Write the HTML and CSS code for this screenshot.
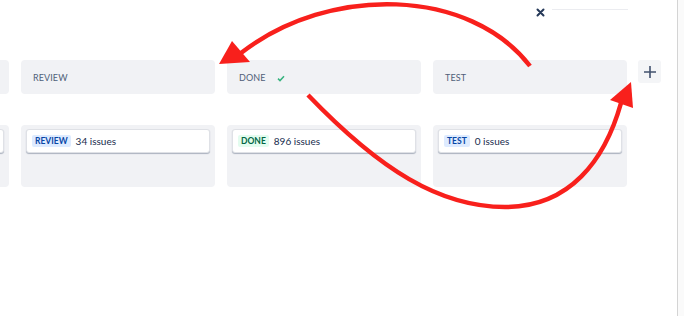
FILE: index.html
```html
<!DOCTYPE html>
<html lang="en">
<head>
  <meta charset="UTF-8">
  <title>Board</title>
  <link rel="stylesheet" href="styles.css">
</head>
<body>
  <div class="page">
    <div class="main">
      <div class="topbar">
        <svg class="close" width="9" height="9" viewBox="0 0 9 9"><path d="M1.5 1.5 L7.5 7.5 M7.5 1.5 L1.5 7.5" stroke="#253858" stroke-width="2" stroke-linecap="round"/></svg>
        <div class="topline"></div>
      </div>

      <div class="board">
        <!-- column scrolled out of view on the left -->
        <div class="column">
          <div class="col-head"></div>
          <div class="col-body">
            <div class="card"></div>
          </div>
        </div>
        <div class="column">
          <div class="col-head"><span>REVIEW</span></div>
          <div class="col-body">
            <div class="card"><span class="tag tag-blue">REVIEW</span><span class="count">34 issues</span></div>
          </div>
        </div>
        <div class="column">
          <div class="col-head"><span>DONE</span>
            <svg class="check" width="8" height="7" viewBox="0 0 8 7"><path d="M1 3.6 L3 5.6 L7 1.2" fill="none" stroke="#36b37e" stroke-width="1.5"/></svg>
          </div>
          <div class="col-body">
            <div class="card"><span class="tag tag-green">DONE</span><span class="count">896 issues</span></div>
          </div>
        </div>
        <div class="column">
          <div class="col-head"><span>TEST</span></div>
          <div class="col-body">
            <div class="card"><span class="tag tag-blue">TEST</span><span class="count">0 issues</span></div>
          </div>
        </div>
        <button class="add-col">
          <svg width="14" height="14" viewBox="0 0 14 14"><path d="M7 1 V13 M1 7 H13" stroke="#42526e" stroke-width="1.6"/></svg>
        </button>
      </div>
    </div>
    <div class="scrollbar"></div>
  </div>

  <!-- annotation arrows -->
  <svg class="arrows" width="684" height="316" viewBox="0 0 684 316">
    <path d="M530 66 C470 -12 330 -16 241 53" fill="none" stroke="#f8201c" stroke-width="4.5"/>
    <polygon points="219,64 232,41 250,62" fill="#f8201c"/>
    <path d="M308 95 C380 170 440 207 505 207 C570 207 605 160 621 103" fill="none" stroke="#f8201c" stroke-width="4.5"/>
    <polygon points="631,82 610,100 633,108" fill="#f8201c"/>
  </svg>
</body>
</html>
```

FILE: styles.css
```css
body {
  margin: 0;
  padding: 0;
  background: #ffffff;
  font-family: "Lato", "Open Sans", sans-serif;
  color: #172b4d;
}

.page {
  display: flex;
  width: 684px;
  height: 316px;
  overflow: hidden;
}

.main {
  flex: 1;
  overflow: hidden;
}

.scrollbar {
  width: 6px;
  border-left: 1px solid #d4d4d4;
  background: #fafafa;
}

.topbar {
  height: 22px;
  display: flex;
  align-items: flex-start;
  justify-content: flex-end;
  padding-right: 49px;
}

.close {
  margin-top: 8px;
  margin-right: 7px;
}

.topline {
  width: 76px;
  height: 1px;
  margin-top: 9px;
  background: #ebecf0;
}

.board {
  display: flex;
  align-items: flex-start;
  gap: 12px;
  margin-top: 38px;
  margin-left: -185px;
}

.column {
  width: 194px;
  flex-shrink: 0;
}

.col-head {
  height: 34px;
  background: #f1f2f5;
  border-radius: 4px;
  display: flex;
  align-items: center;
  padding-left: 12px;
  font-size: 9px;
  color: #505f79;
  letter-spacing: 0.1px;
}

.check {
  margin-left: 11px;
  margin-top: 2px;
}

.col-body {
  margin-top: 31px;
  height: 62px;
  box-sizing: border-box;
  background: #f1f2f5;
  border-radius: 4px;
  padding: 4px 5px;
}

.card {
  height: 24px;
  box-sizing: border-box;
  background: #ffffff;
  border: 1px solid #dfe1e6;
  border-radius: 3px;
  box-shadow: 0 1px 1px rgba(9, 30, 66, 0.3);
  display: flex;
  align-items: center;
  padding-left: 5px;
}

.tag {
  font-size: 8.5px;
  font-weight: bold;
  padding: 1px 3px;
  border-radius: 2px;
  margin-right: 5px;
}

.tag-blue {
  background: #deebff;
  color: #0747a6;
}

.tag-green {
  background: #e3fcef;
  color: #006644;
}

.count {
  font-size: 10px;
  color: #172b4d;
}

.add-col {
  width: 23px;
  height: 23px;
  margin-left: -1px;
  padding: 0;
  border: none;
  border-radius: 3px;
  background: #f4f5f7;
  display: flex;
  align-items: center;
  justify-content: center;
  flex-shrink: 0;
}

.arrows {
  position: absolute;
  left: 0;
  top: 0;
  pointer-events: none;
}
```
